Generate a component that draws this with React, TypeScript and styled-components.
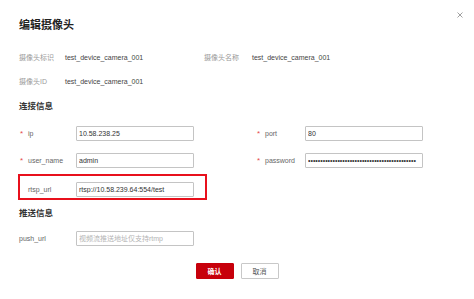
import * as React from "react"
import styled, { createGlobalStyle } from "styled-components"

const GlobalStyle = createGlobalStyle`
  body {
    margin: 0;
    background: #ffffff;
    font-family: "Liberation Sans", "Noto Sans CJK SC", sans-serif;
    color: #333333;
  }
`

const Dialog = styled.div`
  position: relative;
  width: 474px;
  height: 299px;
  box-sizing: border-box;
  padding-left: 19px;
  background: #ffffff;
  overflow: hidden;
`

const Header = styled.div`
  display: flex;
  justify-content: space-between;
  align-items: flex-start;
  height: 45px;
`

const Title = styled.div`
  padding-top: 19px;
  font-size: 11px;
  line-height: 12px;
  font-weight: bold;
  color: #222;
`

const Close = styled.button`
  margin: 10px 10px 0 0;
  padding: 0;
  width: 9px;
  height: 9px;
  border: none;
  background: none;
  display: flex;
  align-items: center;
  justify-content: center;
`

const InfoGrid = styled.div`
  display: grid;
  grid-template-columns: 185px 1fr;
`

const InfoItem = styled.div<{ $labelWidth: number }>`
  display: flex;
  height: 24px;
  align-items: center;
  font-size: 7px;

  & > span:first-child {
    width: ${p => p.$labelWidth}px;
    color: #9a9a9a;
  }
`

const InfoValue = styled.span`
  color: #444;
`

const SectionTitle = styled.div`
  height: 26px;
  line-height: 26px;
  font-size: 8.5px;
  font-weight: bold;
  color: #333;
`

const FormGrid = styled.div`
  display: grid;
  grid-template-columns: 237px 1fr;
`

const FormRow = styled.div<{ $height?: number }>`
  display: flex;
  align-items: center;
  height: ${p => p.$height ?? 28}px;
`

const Label = styled.label<{ $width: number }>`
  width: ${p => p.$width}px;
  font-size: 7px;
  color: #666;
  display: flex;
  align-items: center;
`

const Star = styled.span`
  color: #e5484d;
  font-size: 8px;
  width: 8px;
  margin-left: 1px;
`

const Input = styled.input`
  box-sizing: border-box;
  width: 118px;
  height: 15px;
  margin: 0;
  padding: 0 2px;
  border: 1px solid #c4c4c4;
  border-radius: 1px;
  font-family: "Liberation Sans", "Noto Sans CJK SC", sans-serif;
  font-size: 7px;
  color: #333;
  outline: none;

  &::placeholder {
    color: #b4b4b4;
  }
`

const Highlight = styled.div`
  box-sizing: border-box;
  width: 189px;
  margin-left: -1px;
  padding: 6px 0 1px 8px;
  border: 2px solid #e8101c;
  display: flex;
  align-items: center;
`

const Footer = styled.div`
  display: flex;
  justify-content: center;
  gap: 7px;
  margin-top: 12px;
  margin-left: -19px;
`

const Button = styled.button<{ $primary?: boolean }>`
  width: 38px;
  height: 16px;
  padding: 0;
  border: 1px solid ${p => (p.$primary ? "#c7000b" : "#c8c8c8")};
  border-radius: 1px;
  background: ${p => (p.$primary ? "#c7000b" : "#ffffff")};
  color: ${p => (p.$primary ? "#ffffff" : "#555")};
  font-family: "Liberation Sans", "Noto Sans CJK SC", sans-serif;
  font-size: 7px;
  font-weight: ${p => (p.$primary ? "bold" : "normal")};
`

export default function App() {
  return <>
    <GlobalStyle />
    <Dialog>
      <Header>
        <Title>编辑摄像头</Title>
        <Close aria-label="close">
          <svg width="6" height="6" viewBox="0 0 6 6">
            <path d="M0.5 0.5L5.5 5.5M5.5 0.5L0.5 5.5" stroke="#888" strokeWidth="0.8" />
          </svg>
        </Close>
      </Header>
      <InfoGrid>
        <InfoItem $labelWidth={46}>
          <span>摄像头标识</span>
          <InfoValue>test_device_camera_001</InfoValue>
        </InfoItem>
        <InfoItem $labelWidth={48}>
          <span>摄像头名称</span>
          <InfoValue>test_device_camera_001</InfoValue>
        </InfoItem>
        <InfoItem $labelWidth={46}>
          <span>摄像头ID</span>
          <InfoValue>test_device_camera_001</InfoValue>
        </InfoItem>
      </InfoGrid>

      <SectionTitle>连接信息</SectionTitle>
      <FormGrid>
        <FormRow>
          <Label $width={57}><Star>*</Star>ip</Label>
          <Input defaultValue="10.58.238.25" />
        </FormRow>
        <FormRow>
          <Label $width={49}><Star>*</Star>port</Label>
          <Input defaultValue="80" />
        </FormRow>
        <FormRow $height={27}>
          <Label $width={57}><Star>*</Star>user_name</Label>
          <Input defaultValue="admin" />
        </FormRow>
        <FormRow $height={27}>
          <Label $width={49}><Star>*</Star>password</Label>
          <Input type="password" defaultValue={"x".repeat(44)} />
        </FormRow>
      </FormGrid>
      <Highlight>
        <Label $width={48}>rtsp_url</Label>
        <Input defaultValue="rtsp://10.58.239.64:554/test" />
      </Highlight>

      <SectionTitle>推送信息</SectionTitle>
      <FormRow $height={25}>
        <Label $width={57}>push_url</Label>
        <Input placeholder="视频流推送地址仅支持rtmp" />
      </FormRow>

      <Footer>
        <Button $primary>确认</Button>
        <Button>取消</Button>
      </Footer>
    </Dialog>
  </>
}
